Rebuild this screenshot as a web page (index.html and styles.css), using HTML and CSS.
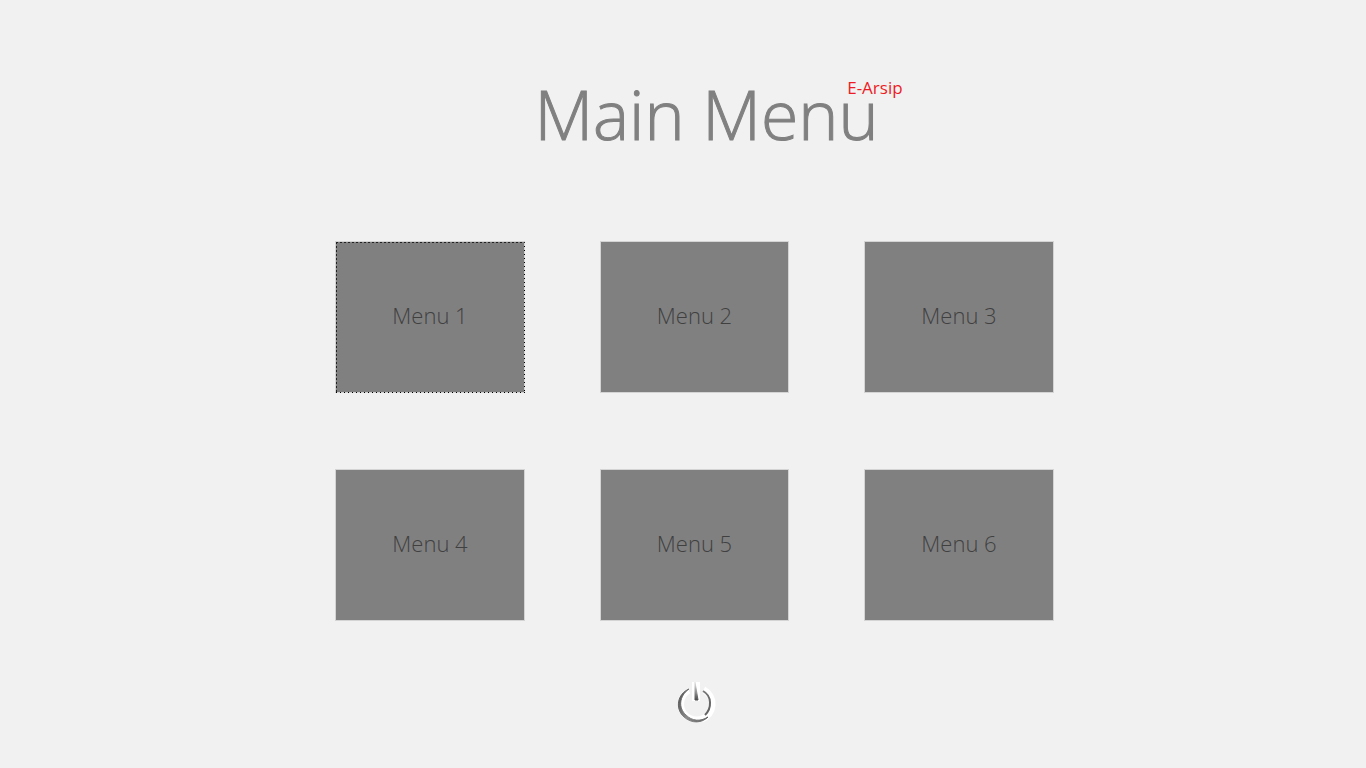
FILE: index.html
```
<!DOCTYPE html>
<html lang="id">
<head>
  <meta charset="UTF-8" />
  <meta name="viewport" content="width=device-width, initial-scale=1.0"/>
  <title>E-Arsip</title>
  <link rel="stylesheet" href="styles.css">
</head>
<body>
  <main class="container">
    <header class="title">
      <h1>Main Menu</h1>
      <span class="app-name">E-Arsip</span>
    </header>

    <nav class="menu-grid" aria-label="Main Menu">
      <button type="button" class="menu-tile selected">Menu 1</button>
      <button type="button" class="menu-tile">Menu 2</button>
      <button type="button" class="menu-tile">Menu 3</button>
      <button type="button" class="menu-tile">Menu 4</button>
      <button type="button" class="menu-tile">Menu 5</button>
      <button type="button" class="menu-tile">Menu 6</button>
    </nav>

    <button type="button" class="btn-power" aria-label="Exit">
      <svg width="52" height="52" viewBox="0 0 52 52" fill="none">
        <defs>
          <linearGradient id="ring" x1="8" y1="20" x2="42" y2="32" gradientUnits="userSpaceOnUse">
            <stop offset="0" stop-color="#555555"/>
            <stop offset="0.45" stop-color="#8a8a8a"/>
            <stop offset="1" stop-color="#606060"/>
          </linearGradient>
          <linearGradient id="bar" x1="0" y1="6" x2="0" y2="25" gradientUnits="userSpaceOnUse">
            <stop offset="0" stop-color="#e8e8e8"/>
            <stop offset="1" stop-color="#444444"/>
          </linearGradient>
          <filter id="soft" x="-20%" y="-20%" width="140%" height="140%">
            <feGaussianBlur stdDeviation="0.7"/>
          </filter>
        </defs>
        <!-- white highlight -->
        <g filter="url(#soft)" stroke="#ffffff">
          <path d="M20 15 A15 15 0 1 0 35 15" stroke-width="5"/>
          <path d="M35 13 A17 17 0 0 1 33 44" stroke-width="5"/>
          <path d="M27 6 V25" stroke-width="8"/>
        </g>
        <!-- dark edge -->
        <g filter="url(#soft)">
          <path d="M20 13 C8 18 6 33 15 41 C23 48 33 47 39 41 C31 46 23 45 17 39 C9 32 10 20 20 13Z" fill="url(#ring)" stroke="url(#ring)" stroke-width="1"/>
          <path d="M34 15 C43 20 43 32 36 39" stroke="url(#ring)" stroke-width="2"/>
          <path d="M26 6 L29 24 H26Z" fill="url(#bar)" stroke="url(#bar)" stroke-width="1"/>
        </g>
      </svg>
    </button>
  </main>
</body>
</html>
```
FILE: styles.css
```
:root {
  --background: #f1f1f1;
  --tile: #808080;
  --tile-text: #404040;
  --tile-border: #d4d4d4;
  --accent: #ed1c24;
}

* {
  box-sizing: border-box;
}

body {
  font-family: 'Segoe UI Light', 'Open Sans', sans-serif;
  font-weight: 300;
  background: var(--background);
  margin: 0;
  min-height: 100vh;
}

.container {
  display: flex;
  flex-direction: column;
  align-items: center;
  padding: 68px 0 40px 23px;
}

.title {
  position: relative;
  margin-left: 24px;
}

h1 {
  margin: 0;
  font-size: 68px;
  line-height: 92px;
  font-weight: 300;
  color: var(--tile);
  -webkit-text-stroke: 1px var(--tile);
}

/* sits over the end of the heading */
.app-name {
  position: absolute;
  top: 8px;
  right: -24px;
  font-size: 17px;
  line-height: 24px;
  font-weight: 400;
  color: var(--accent);
}

.menu-grid {
  display: grid;
  grid-template-columns: 190px 189px 190px;
  gap: 76px 75px;
  margin-top: 81px;
}

.menu-tile {
  position: relative;
  height: 152px;
  padding: 0 0 4px;
  border: 1px solid var(--tile-border);
  background: var(--tile);
  color: var(--tile-text);
  font-family: inherit;
  font-size: 22px;
  font-weight: 300;
  cursor: pointer;
}

/* dotted focus rectangle */
.menu-tile.selected::after {
  content: '';
  position: absolute;
  inset: 0 -1px -1px 0;
  background:
    repeating-linear-gradient(90deg, #222222 0 2px, transparent 2px 4px) top / 100% 1px no-repeat,
    repeating-linear-gradient(180deg, #222222 0 2px, transparent 2px 4px) left / 1px 100% no-repeat,
    repeating-linear-gradient(90deg, #000000 0 1px, transparent 1px 4px) bottom / 100% 1px no-repeat,
    repeating-linear-gradient(180deg, #000000 0 1px, transparent 1px 4px) right / 1px 100% no-repeat;
}

.btn-power {
  display: flex;
  margin-top: 55px;
  padding: 0;
  border: none;
  background: transparent;
  cursor: pointer;
}
```
